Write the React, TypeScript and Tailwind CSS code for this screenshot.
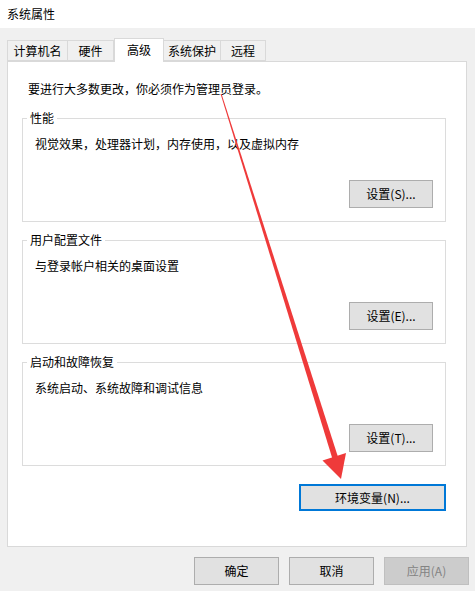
import React from 'react';

const font = { fontFamily: '"Noto Sans CJK SC", "Noto Sans", sans-serif' };

const tabs = [
  { label: '计算机名', w: 'w-[61px]' },
  { label: '硬件', w: 'w-[47px]' },
  { label: '高级', w: 'w-[50px]', active: true },
  { label: '系统保护', w: 'w-[58px]' },
  { label: '远程', w: 'w-[46px]' },
];

const groups = [
  { title: '性能', desc: '视觉效果，处理器计划，内存使用，以及虚拟内存', btn: '设置(S)...' },
  { title: '用户配置文件', desc: '与登录帐户相关的桌面设置', btn: '设置(E)...' },
  { title: '启动和故障恢复', desc: '系统启动、系统故障和调试信息', btn: '设置(T)...' },
];

const WinButton: React.FC<{ children: React.ReactNode; className?: string }> = ({ children, className = '' }) => (
  <button className={`h-[28px] bg-[#e1e1e1] border border-[#adadad] text-[12px] text-black flex items-center justify-center ${className}`}>
    {children}
  </button>
);

const App: React.FC = () => {
  return (
    <div className="relative w-[475px] h-[591px] bg-[#f0f0f0] overflow-hidden text-[12px] text-black" style={font}>
      {/* Title bar */}
      <div className="h-[28px] bg-white flex items-center px-[7px] text-[12px]">系统属性</div>

      {/* Tabs */}
      <div className="flex items-end pl-[7px] h-[33px]">
        {tabs.map(t =>
          t.active ? (
            <div
              key={t.label}
              className={`${t.w} h-[24px] -mb-px relative z-10 bg-white border border-b-0 border-[#d9d9d9] flex items-center justify-center pb-[2px]`}
            >
              {t.label}
            </div>
          ) : (
            <div
              key={t.label}
              className={`${t.w} h-[21px] bg-[#f0f0f0] border border-[#d9d9d9] -ml-px first:ml-0 flex items-center justify-center`}
            >
              {t.label}
            </div>
          )
        )}
      </div>

      {/* Panel */}
      <div className="ml-[7px] w-[460px] h-[486px] bg-white border border-[#d9d9d9] pl-[14px] pr-[20px] pt-[19px]">
        <p className="pl-[6px] leading-[16px]">要进行大多数更改，你必须作为管理员登录。</p>

        <div className="flex flex-col gap-[18px] mt-[21px]">
          {groups.map(g => (
            <div key={g.title} className="relative h-[104px] border border-[#dcdcdc] flex flex-col pl-[12px] pr-[12px]">
              <span className="absolute -top-[9px] left-[4px] bg-white px-[3px] leading-[16px]">{g.title}</span>
              <p className="mt-[17px] leading-[16px]">{g.desc}</p>
              <div className="flex justify-end mt-auto mb-[13px]">
                <WinButton className="w-[84px]">{g.btn}</WinButton>
              </div>
            </div>
          ))}
        </div>

        <div className="flex justify-end mt-[18px]">
          <button className="w-[147px] h-[27px] bg-[#e1e1e1] border-2 border-[#0078d7] text-[12px] flex items-center justify-center">
            环境变量(N)...
          </button>
        </div>
      </div>

      {/* Footer buttons */}
      <div className="flex justify-end gap-[10px] pr-[6px] mt-[10px]">
        <WinButton className="w-[85px]">确定</WinButton>
        <WinButton className="w-[85px]">取消</WinButton>
        <button className="w-[85px] h-[28px] bg-[#cccccc] border border-[#bfbfbf] text-[12px] text-[#838383] flex items-center justify-center">
          应用(A)
        </button>
      </div>

      {/* Red annotation arrow */}
      <svg className="absolute inset-0 pointer-events-none" width="475" height="591" viewBox="0 0 475 591">
        <polygon points="220.6,94 221.6,94 338,457 332.5,459" fill="#ef3a3a" />
        <polygon points="322.5,460.5 346,453 341,479" fill="#ef3a3a" />
      </svg>
    </div>
  );
};

export default App;
